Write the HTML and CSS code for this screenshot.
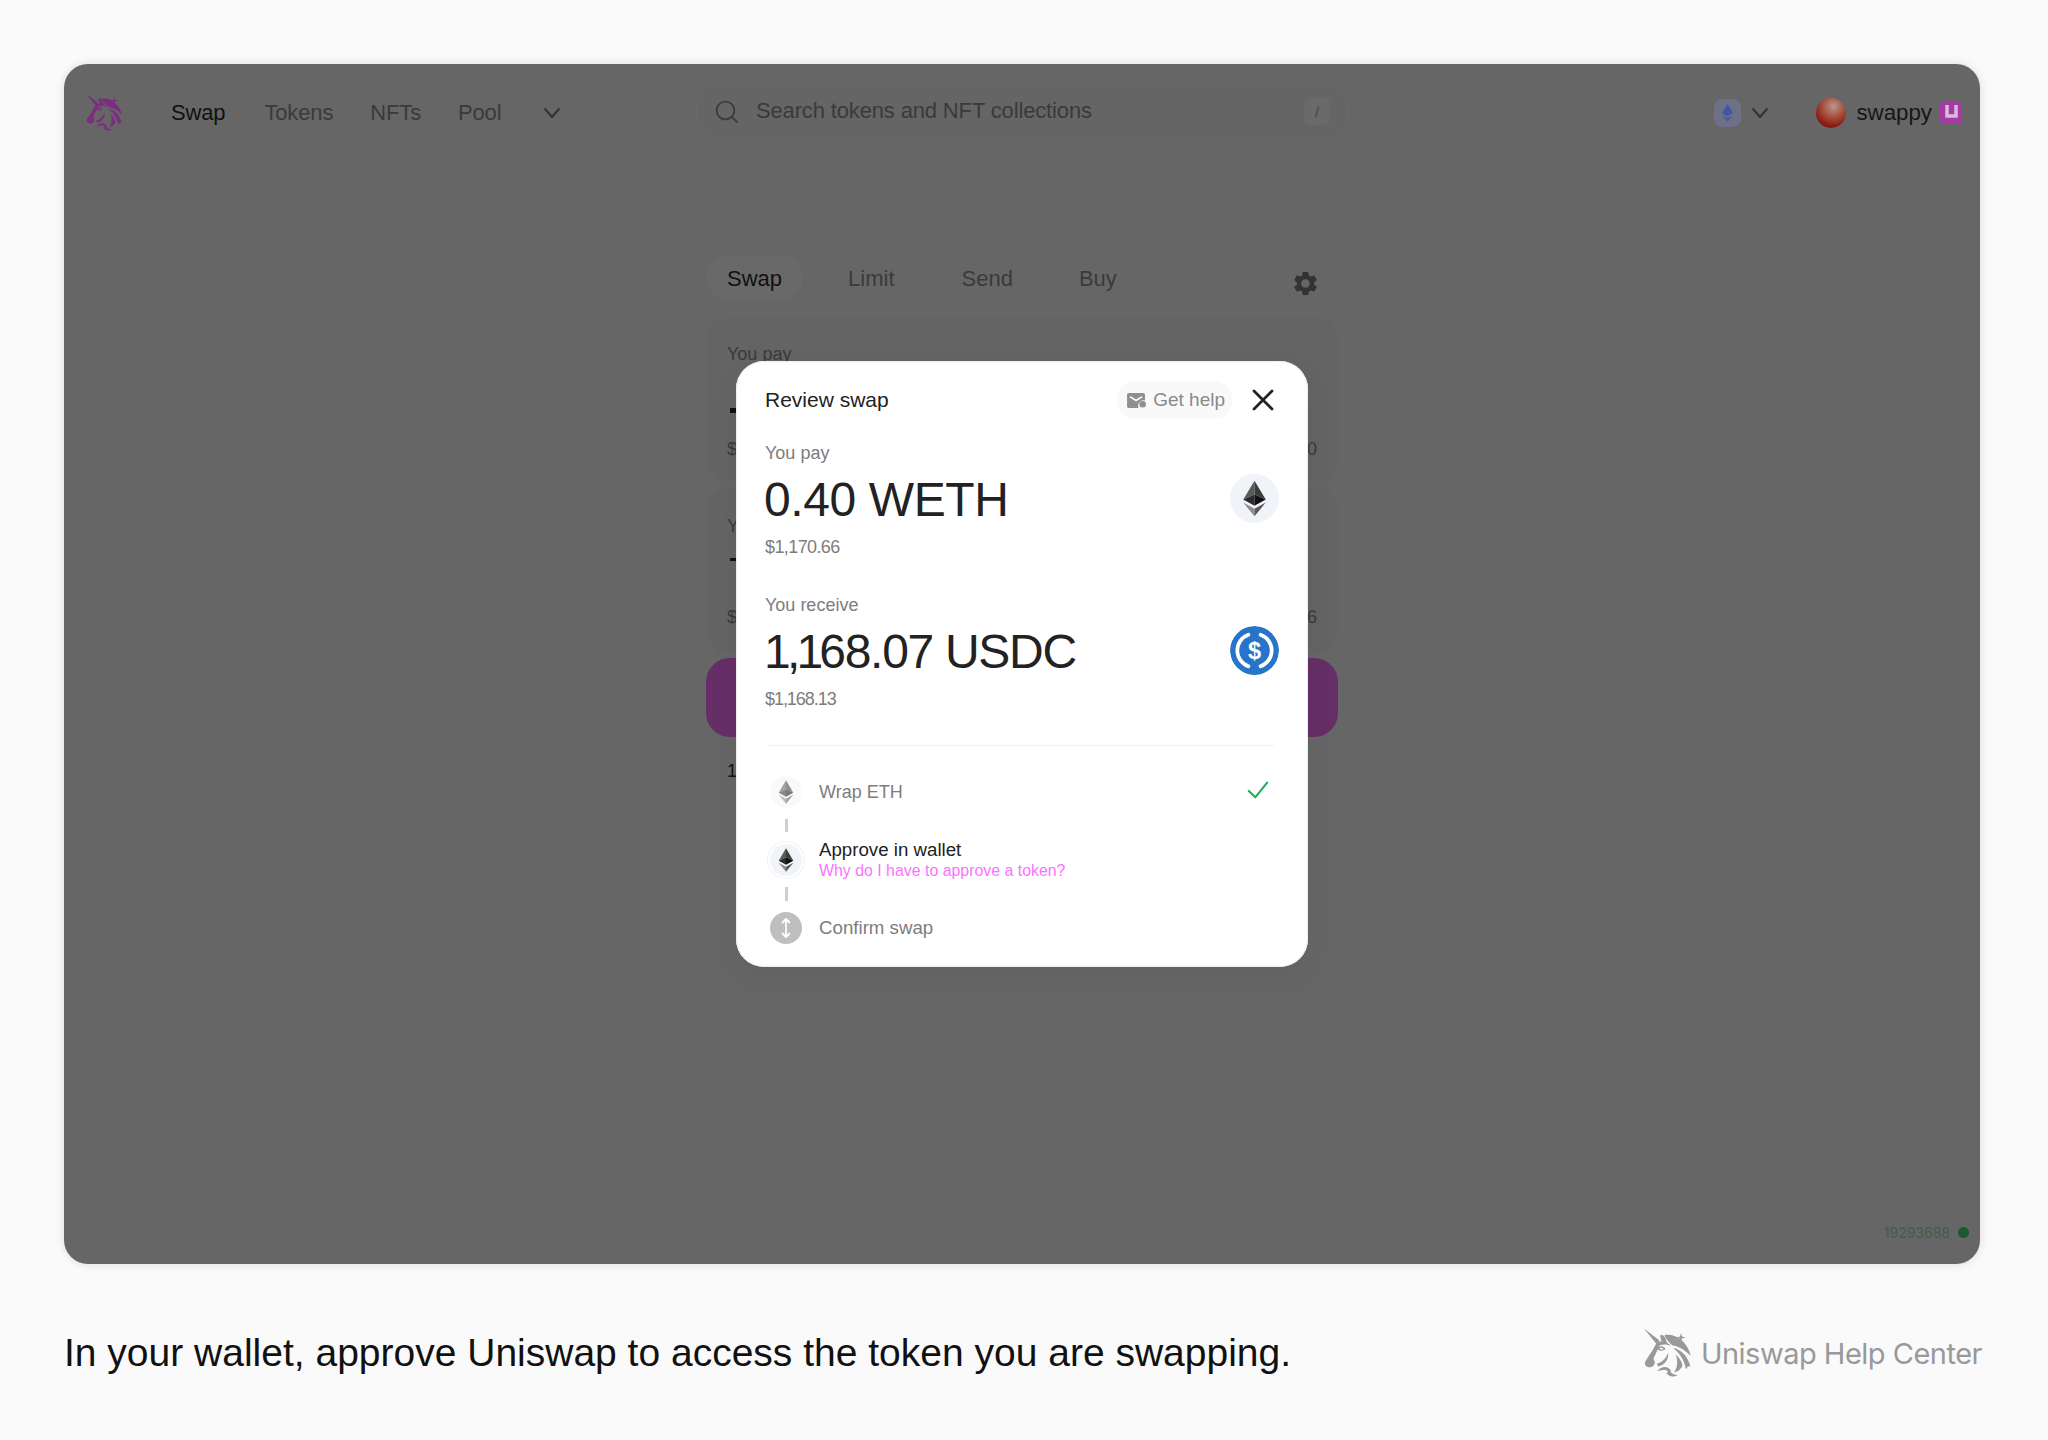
FILE: index.html
```html
<!DOCTYPE html>
<html lang="en">
<head>
<meta charset="utf-8">
<title>Review swap</title>
<link rel="stylesheet" href="styles.css">
</head>
<body>
<svg class="defs" width="0" height="0" aria-hidden="true">
  <defs>
    <symbol id="unicorn" viewBox="0 0 56 56">
      <path d="M4 3.500 L19.500 15.500 L16.500 19 Z"/>
      <path d="M16.500 18 C21 15 27 16 31 21 C27 19 23 19 19.500 20.500 C17.500 25 15 30 13.500 33.500 C14.500 36 15.500 38 14 40 C12 43 7.500 43 5.500 40.500 C4 38 5.500 35.500 7.500 33 C11 28 14 23 16.500 18 Z"/>
      <path fill-rule="evenodd" d="M17 23.500 C19 20.500 24 20.500 25.500 24 C23 26.500 19 26.500 17 23.500 Z M19.500 23.500 C20.500 25 22.500 25 23.500 24 C22.500 22.500 20.500 22.500 19.500 23.500 Z"/>
      <path d="M20 10.500 C22 9 25.500 10 27 18 C25 17 23 16.500 21.500 16.500 Z"/>
      <path d="M24.500 10 C30 9 37 10.500 42 15.500 C46.500 20 50 26 50.500 31 C44.500 24 37 21 32.500 20.500 C29 17.500 26 14 24.500 10 Z"/>
      <path d="M33 23 C40 24 47.500 30 50.500 41.500 C49 40.500 47 41.500 46 44.500 C44.500 36 40 28 33 23 Z"/>
      <path d="M35.500 29.500 C38 35 38 42 34 47.500 C38 46.500 41.500 44 42.500 40 C41.500 36 39 32 35.500 29.500 Z"/>
      <path d="M17 38.500 C22 37.500 26 33.500 28 28 C29.500 33 25 40.500 18 41.500 Z"/>
      <path d="M17.500 46 C21 41 28 41 30.500 45 C31.500 48 28.500 50.500 26 48.500 C28 48.500 28.500 45.500 25.500 45 C23 44.800 20.500 45.500 17.500 46 Z"/>
      <path d="M30 46.500 C32 49 35 50 37.500 50 C33.500 52.500 30 51.500 27.500 49.500 Z"/>
      <path d="M41 8 L42 11.500 L45.500 12.500 L42 13.500 L41 17 L40 13.500 L36.500 12.500 L40 11.500 Z"/>
    </symbol>
    <symbol id="eth" viewBox="0 0 48 48">
      <path fill="#5a5a5a" d="M24 6.500 L13 25 L24 20 Z"/>
      <path fill="#3c3c3c" d="M24 6.500 L35 25 L24 20 Z"/>
      <path fill="#2a2a2a" d="M13 25 L24 20 L24 31 Z"/>
      <path fill="#111" d="M35 25 L24 20 L24 31 Z"/>
      <path fill="#8c8c8c" d="M13 28 L24 34 L24 41.500 Z"/>
      <path fill="#5a5a5a" d="M35 28 L24 34 L24 41.500 Z"/>
    </symbol>
    <symbol id="chev" viewBox="0 0 20 20">
      <path d="M3 6 L10 14 L17 6" fill="none" stroke="currentColor" stroke-width="2" stroke-linecap="round" stroke-linejoin="round"/>
    </symbol>
  </defs>
</svg>

<main class="page">
  <section class="window">
    <header class="topbar">
      <div class="left">
        <svg class="logo"><use href="#unicorn"/></svg>
        <nav class="nav">
          <span class="nav-item active">Swap</span>
          <span class="nav-item">Tokens</span>
          <span class="nav-item">NFTs</span>
          <span class="nav-item">Pool</span>
          <svg class="chev"><use href="#chev"/></svg>
        </nav>
      </div>
      <div class="search">
        <svg class="search-icon" viewBox="0 0 24 24"><circle cx="11" cy="11" r="8.500" fill="none" stroke="currentColor" stroke-width="1.800"/><path d="M17.500 17.500 L22 22" stroke="currentColor" stroke-width="1.800" stroke-linecap="round"/></svg>
        <span class="search-text">Search tokens and NFT collections</span>
        <span class="slash">/</span>
      </div>
      <div class="right">
        <span class="chain">
          <svg viewBox="0 0 16 24"><path fill="#3f57a8" d="M8 1 L15 12 L8 16 L1 12 Z"/><path fill="#3f57a8" d="M2 15 L8 18.500 L14 15 L8 23 Z"/></svg>
        </span>
        <svg class="chev chev-right"><use href="#chev"/></svg>
        <span class="avatar"></span>
        <span class="account">swappy</span>
        <span class="badge"><svg viewBox="0 0 22 22"><path d="M7 3 V14 H16 V3" fill="none" stroke="#d9bcd9" stroke-width="3.500"/></svg></span>
      </div>
    </header>

    <div class="widget">
      <div class="tabs">
        <span class="tab tab-active">Swap</span>
        <span class="tab tab-limit">Limit</span>
        <span class="tab">Send</span>
        <span class="tab">Buy</span>
        <svg class="gear" viewBox="0 0 24 24"><path fill="#333" fill-rule="evenodd" d="M19.140 12.940c.04-.3.060-.61.060-.94 0-.32-.02-.64-.07-.94l2.030-1.580c.18-.14.230-.41.120-.61l-1.920-3.320c-.12-.22-.37-.29-.59-.22l-2.390.96c-.5-.38-1.030-.7-1.620-.94l-.36-2.540c-.04-.24-.24-.41-.48-.41h-3.840c-.24 0-.43.17-.47.41l-.36 2.540c-.59.24-1.130.57-1.620.94l-2.390-.96c-.22-.08-.47 0-.59.22L2.740 8.870c-.12.21-.08.47.12.61l2.030 1.580c-.05.3-.09.63-.09.94s.02.64.07.94l-2.030 1.580c-.18.14-.23.41-.12.61l1.920 3.320c.12.22.37.29.59.22l2.390-.96c.5.38 1.030.7 1.620.94l.36 2.540c.05.24.24.41.48.41h3.840c.24 0 .44-.17.47-.41l.36-2.540c.59-.24 1.130-.56 1.620-.94l2.390.96c.22.08.47 0 .59-.22l1.920-3.320c.12-.22.07-.47-.12-.61l-2.010-1.580zM12 15.600c-1.980 0-3.600-1.620-3.600-3.600s1.620-3.600 3.600-3.600 3.600 1.620 3.600 3.600-1.620 3.600-3.600 3.600z"/></svg>
      </div>
      <div class="panel">
        <div class="panel-label">You pay</div>
        <div class="panel-dash"></div>
        <div class="panel-foot"><span>$</span><span>0</span></div>
      </div>
      <div class="panel panel-second">
        <div class="panel-label">Y</div>
        <div class="panel-dash thin"></div>
        <div class="panel-foot"><span>$</span><span>6</span></div>
      </div>
      <div class="cta"></div>
      <div class="note">1</div>
    </div>

    <div class="block"><span>19293688</span><i class="dot"></i></div>

    <div class="modal">
      <div class="modal-head">
        <span class="modal-title">Review swap</span>
        <span class="help">
          <svg viewBox="0 0 20 18"><path fill="#8f8f8f" d="M2 1 H17 Q19 1 19 3 V9 Q15 8 13 11 Q11 13 12 17 H2 Q0 17 0 15 V3 Q0 1 2 1 Z"/><path d="M3 5 L9.500 9 L16 5" fill="none" stroke="#fff" stroke-width="1.600"/><circle cx="16.500" cy="13" r="3.500" fill="#8f8f8f"/></svg>
          Get help
        </span>
        <svg class="close" viewBox="0 0 24 24"><path d="M3 3 L21 21 M21 3 L3 21" stroke="#222" stroke-width="2.800" stroke-linecap="round"/></svg>
      </div>

      <div class="label first-label">You pay</div>
      <div class="amount-row">
        <span class="amount">0.40 WETH</span>
        <svg class="token eth-token"><use href="#eth"/></svg>
      </div>
      <div class="usd usd-first">$1,170.66</div>

      <div class="label second-label">You receive</div>
      <div class="amount-row">
        <span class="amount amount-tight"><span class="tight-ones">1,1</span>68.07 USDC</span>
        <svg class="token usdc-token" viewBox="0 0 48 48">
          <circle cx="24" cy="24" r="24" fill="#2775ca"/>
          <path d="M18 8.500 A16.500 16.500 0 0 0 18 39.500 M30 8.500 A16.500 16.500 0 0 1 30 39.500" fill="none" stroke="#fff" stroke-width="3.600" stroke-linecap="round"/>
          <text class="usdc-dollar" x="24" y="32.500" text-anchor="middle">$</text>
        </svg>
      </div>
      <div class="usd usd-second">$1,168.13</div>

      <div class="divider"></div>

      <div class="step">
        <span class="step-icon icon-done"><svg class="faded"><use href="#eth"/></svg></span>
        <span class="step-text step-first muted">Wrap ETH</span>
        <svg class="check" viewBox="0 0 24 24"><path d="M2 13 L9 20 L22 4" fill="none" stroke="#27ae60" stroke-width="2.400" stroke-linecap="round" stroke-linejoin="round"/></svg>
      </div>
      <div class="connector"></div>
      <div class="step">
        <span class="step-icon icon-active"><svg><use href="#eth"/></svg></span>
        <div class="step-stack">
          <span class="step-text">Approve in wallet</span>
          <span class="step-link">Why do I have to approve a token?</span>
        </div>
      </div>
      <div class="connector second-connector"></div>
      <div class="step">
        <span class="step-icon icon-swap">
          <svg viewBox="0 0 32 32"><path d="M16 15 V7 M12.500 10.500 L16 7 L19.500 10.500 M16 17 V25 M12.500 21.500 L16 25 L19.500 21.500" fill="none" stroke="#fff" stroke-width="1.800" stroke-linecap="round" stroke-linejoin="round"/></svg>
        </span>
        <span class="step-text muted">Confirm swap</span>
      </div>
    </div>
  </section>

  <footer class="footer">
    <p class="caption">In your wallet, approve Uniswap to access the token you are swapping.</p>
    <div class="brand">
      <svg class="brand-logo"><use href="#unicorn"/></svg>
      <span>Uniswap Help Center</span>
    </div>
  </footer>
</main>
</body>
</html>
```

FILE: styles.css
```css
* { box-sizing: border-box; }
html, body { margin: 0; padding: 0; }
body {
  width: 2048px;
  height: 1440px;
  background: #fafafa;
  overflow: hidden;
  font-family: "Liberation Sans", Arial, sans-serif;
}
.defs { position: absolute; }
.page { padding: 64px 66px 0 64px; }

.window {
  position: relative;
  width: 1916px;
  height: 1200px;
  background: #666666;
  border-radius: 24px;
  box-shadow: 0 0 10px rgba(0, 0, 0, .12);
  color: #111;
}

.topbar {
  display: grid;
  grid-template-columns: 1fr 652px 1fr;
  align-items: center;
  height: 98px;
}
.left { display: flex; align-items: center; padding-left: 19px; }
.logo { flex: none; width: 43px; height: 43px; fill: #7b2d82; margin-top: -1px; }
.nav { display: flex; align-items: center; margin-left: 45px; font-size: 22px; letter-spacing: -.15px; color: #3a3a3a; }
.nav-item { margin-right: 37px; }
.nav-item:first-child { margin-right: 39px; }
.nav-item:nth-child(4) { margin-right: 41px; }
.chev { width: 20px; height: 20px; color: #333; }
.nav-item.active { color: #111; }

.search {
  display: flex;
  align-items: center;
  height: 52px;
  margin-top: -4px;
  padding: 0 17px 0 17px;
  border: 1px solid #696969;
  border-radius: 18px;
  background: #656565;
  color: #3a3a3a;
  font-size: 22px;
  letter-spacing: -.15px;
}
.search-icon { width: 25px; height: 25px; color: #3c3c3c; }
.search-text { margin-left: 17px; flex: 1; }
.slash {
  width: 26px;
  height: 27px;
  border-radius: 6px;
  background: #6a6a6a;
  color: #444;
  font-size: 15px;
  text-align: center;
  line-height: 27px;
}

.right { display: flex; align-items: center; justify-content: flex-end; padding-right: 18px; }
.chain {
  display: flex;
  align-items: center;
  justify-content: center;
  width: 27px;
  height: 28px;
  border-radius: 8px;
  background: #6e7186;
}
.chain svg { width: 13px; height: 20px; }
.chev-right { margin-left: 9px; }
.avatar {
  width: 30px;
  height: 30px;
  margin-left: 46px;
  border-radius: 50%;
  background: radial-gradient(circle at 58% 28%, #b8988a 0, #a44a3a 42%, #8c1c12 70%, #5e0f0a 100%);
}
.account { margin-left: 10px; font-size: 22.300px; color: #161616; }
.badge {
  display: flex;
  flex: none;
  width: 22px;
  height: 22px;
  margin-left: 8px;
  border-radius: 4px;
  background: #a63ba6;
}
.badge svg { width: 22px; height: 22px; }

.widget { width: 632px; margin: 93px auto 0; }
.tabs { display: flex; align-items: center; height: 45px; font-size: 22px; color: #3a3a3a; }
.tab { padding: 0 21px; margin-right: 24px; height: 45px; line-height: 47px; border-radius: 22px; }
.tab-active { background: #696969; color: #111; margin-right: 24px; }
.tab-limit { margin-right: 25px; }
.gear { width: 29px; height: 29px; margin-left: auto; margin-top: 12px; margin-right: 18px; }

.panel {
  height: 163px;
  margin-top: 18px;
  padding: 24px 21px 0;
  border-radius: 20px;
  background: #646464;
  color: #3a3a3a;
  font-size: 18px;
}
.panel-second { margin-top: 7px; padding-top: 26px; }
.panel-label { line-height: 24px; }
.panel-dash { width: 8px; height: 5px; margin: 42px 0 0 3px; background: #111; }
.panel-dash.thin { height: 3px; margin-top: 20px; }
.panel-foot { display: flex; justify-content: space-between; margin-top: 24px; line-height: 24px; }
.panel-second .panel-foot { margin-top: 44px; }
.cta { height: 79px; margin-top: 7px; border-radius: 24px; background: #662e66; }
.note { margin: 22px 0 0 21px; font-size: 18px; color: #111; line-height: 24px; }

.block {
  position: absolute;
  right: 11px;
  bottom: 23px;
  display: flex;
  align-items: center;
  gap: 8px;
  font-family: Inter, sans-serif;
  font-size: 14px;
  color: #3f5f4a;
}
.dot { width: 11px; height: 11px; border-radius: 50%; background: #1a5a2e; }

.modal {
  position: absolute;
  left: 672px;
  top: 297px;
  width: 572px;
  height: 606px;
  padding: 20px 32px 0 29px;
  border-radius: 28px;
  background: #fff;
  box-shadow: inset 0 0 0 1px #eeeeee, 0 10px 30px rgba(0, 0, 0, .05);
  color: #222;
}
.modal-head { display: flex; align-items: center; height: 38px; }
.modal-title { font-size: 21px; flex: 1; }
.help {
  display: flex;
  align-items: center;
  gap: 7px;
  height: 38px;
  padding: 0 8px 0 10px;
  border-radius: 19px;
  background: #f9f9f9;
  font-size: 19px;
  color: #8a8a8a;
}
.help svg { width: 19px; height: 17px; }
.close { width: 24px; height: 24px; margin-left: 18px; margin-right: 1px; }

.label { font-size: 18px; line-height: 24px; color: #7d7d7d; }
.first-label { margin-top: 22px; }
.second-label { margin-top: 34px; }
.amount-row { display: flex; align-items: center; justify-content: space-between; height: 49px; margin-top: 9px; }
.amount { margin-left: -1px; padding-top: 2px; font-size: 48px; color: #222; letter-spacing: -.4px; }
.amount-tight { letter-spacing: -1.300px; }
.tight-ones { letter-spacing: -3.800px; }
.token { width: 49px; height: 49px; margin-right: -3px; border-radius: 50%; }
.eth-token { background: #f0f4f8; }
.usdc-dollar { font: 700 23px "Liberation Sans", Arial, sans-serif; fill: #fff; }
.usd { margin-top: 12px; font-size: 18px; line-height: 24px; color: #7d7d7d; }
.usd-first { letter-spacing: -.6px; }
.usd-second { letter-spacing: -1.050px; }

.divider { height: 1px; margin: 34px 2px 0 4px; background: #f0f0f0; }

.step { display: flex; align-items: center; height: 32px; margin-left: 5px; }
.divider + .step { margin-top: 30px; }
.step-icon { display: flex; align-items: center; justify-content: center; flex: none; width: 32px; height: 32px; border-radius: 50%; }
.step-icon svg { width: 32px; height: 32px; }
.icon-done { background: #f9f9f9; }
.icon-active { background: #f0f4f8; box-shadow: 0 0 0 2px #fff, 0 0 0 3px #f4f0f0; }
.icon-swap { background: #bfbfbf; }
.faded { opacity: .55; }
.step-text { margin-left: 17px; font-size: 18.700px; color: #222; line-height: 22px; }
.step-first { font-size: 18px; }
.muted { color: #7d7d7d; }
.step-stack { display: flex; flex-direction: column; }
.step-link { margin-left: 17px; font-size: 15.900px; line-height: 20px; color: #fc72ff; }
.check { width: 22px; height: 22px; margin-left: auto; margin-right: 7px; margin-top: -4px; }
.connector { width: 3px; height: 13px; margin: 11px 0 12px 20px; background: #cfcfcf; }
.second-connector { height: 14px; margin-bottom: 11px; }

.footer { display: flex; align-items: center; justify-content: space-between; margin-top: 61px; }
.caption { margin: 0; font-size: 39px; color: #111; }
.brand { display: flex; align-items: center; gap: 5px; font-family: Inter, sans-serif; font-size: 29px; letter-spacing: -.5px; color: #999; }
.brand-logo { width: 56px; height: 56px; fill: #999; }
```
